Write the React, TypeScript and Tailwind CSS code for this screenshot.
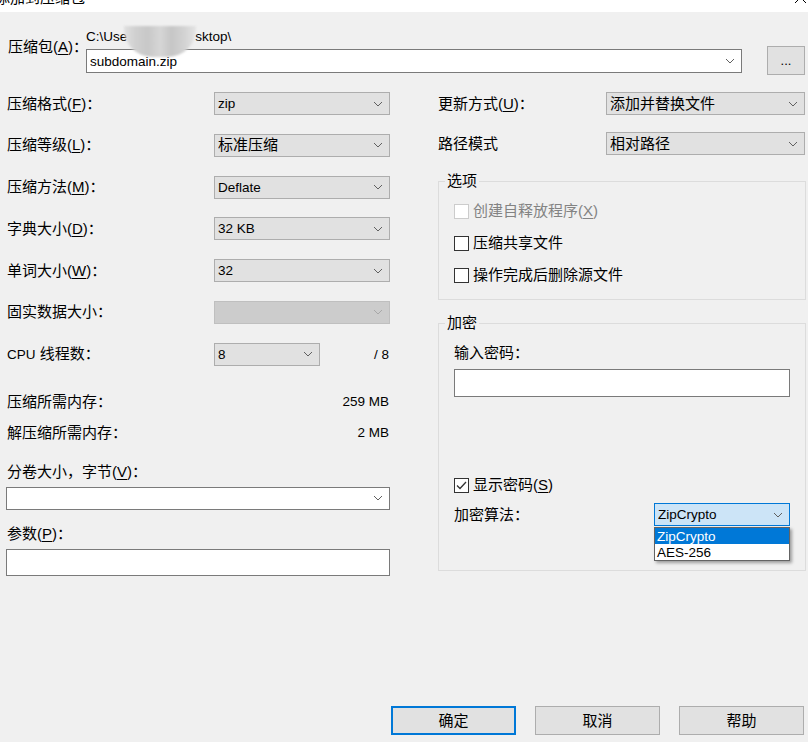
import { ReactNode } from "react";

type ComboVariant = "gray" | "white" | "disabled" | "focus";

const comboStyles: Record<ComboVariant, string> = {
    gray: "bg-[#e1e1e1] border-[#adadad]",
    white: "bg-white border-[#7a7a7a]",
    disabled: "bg-[#cccccc] border-[#bfbfbf]",
    focus: "bg-[#cce4f7] border-[#0078d7]",
};

function K({ children }: { children: ReactNode }) {
    return <span className="underline underline-offset-2">{children}</span>;
}

function Latin({ children }: { children: ReactNode }) {
    return <span className="text-[13.5px]">{children}</span>;
}

function Chevron({ color = "#606060" }: { color?: string }) {
    return (
        <svg width="10" height="6" viewBox="0 0 10 6" className="shrink-0">
            <path d="M1 1 L5 5 L9 1" fill="none" stroke={color} strokeWidth="1" />
        </svg>
    );
}

function Combo({
    value,
    variant = "gray",
    className = "",
    children,
}: {
    value?: ReactNode;
    variant?: ComboVariant;
    className?: string;
    children?: ReactNode;
}) {
    return (
        <div
            className={`relative flex items-center border pl-[3px] pr-[6px] ${comboStyles[variant]} ${className}`}
        >
            <div className="flex-1 truncate leading-[20px]">{value}</div>
            <Chevron color={variant === "disabled" ? "#a8a8a8" : "#606060"} />
            {children}
        </div>
    );
}

function Check({
    checked,
    disabled,
    children,
}: {
    checked?: boolean;
    disabled?: boolean;
    children: ReactNode;
}) {
    return (
        <div className="flex items-center h-[20px] whitespace-nowrap">
            <span
                className={`w-[15px] h-[15px] border bg-white flex items-center justify-center ${
                    disabled ? "border-[#cccccc]" : "border-[#333333]"
                }`}
            >
                {checked && (
                    <svg width="13" height="13" viewBox="0 0 13 13">
                        <path d="M2 6.5 L5 9.5 L11 3" fill="none" stroke="#333333" strokeWidth="1.3" />
                    </svg>
                )}
            </span>
            <span className={`ml-[4px] ${disabled ? "text-[#838383]" : ""}`}>{children}</span>
        </div>
    );
}

function Group({ title, children }: { title: string; children: ReactNode }) {
    return (
        <fieldset className="border border-[#dcdcdc] w-[368px]">
            <legend className="ml-[6px] px-[2px] leading-[20px]">{title}</legend>
            {children}
        </fieldset>
    );
}

const leftRows: { label: ReactNode; value: ReactNode; variant?: ComboVariant }[] = [
    { label: <>压缩格式(<K>F</K>)：</>, value: <Latin>zip</Latin> },
    { label: <>压缩等级(<K>L</K>)：</>, value: "标准压缩" },
    { label: <>压缩方法(<K>M</K>)：</>, value: <Latin>Deflate</Latin> },
    { label: <>字典大小(<K>D</K>)：</>, value: <Latin>32 KB</Latin> },
    { label: <>单词大小(<K>W</K>)：</>, value: <Latin>32</Latin> },
    { label: <>固实数据大小：</>, value: "", variant: "disabled" },
];

function Button({ children, primary }: { children: ReactNode; primary?: boolean }) {
    return (
        <button
            className={`w-[125px] h-[29px] bg-[#e1e1e1] flex items-center justify-center ${
                primary ? "border-2 border-[#0078d7]" : "border border-[#adadad]"
            }`}
        >
            {children}
        </button>
    );
}

export default function App() {
    return (
        <div className="w-[808px] h-[742px] flex flex-col bg-[#f0f0f0] text-black overflow-hidden whitespace-nowrap text-[15px] leading-[20px] font-['Liberation_Sans','Noto_Sans_CJK_SC',sans-serif]">
            {/* title bar, mostly scrolled off */}
            <div className="relative h-[12px] bg-white overflow-hidden shrink-0">
                <div className="ml-[-5px] mt-[-10px] leading-[16px]">添加到压缩包</div>
                <svg className="absolute right-[2px] top-[-8px]" width="11" height="11" viewBox="0 0 11 11">
                    <path d="M0 0 L11 11 M11 0 L0 11" stroke="#000" strokeWidth="1" />
                </svg>
            </div>

            {/* archive path */}
            <div className="flex h-[63px] shrink-0">
                <div className="w-[86px] pl-[8px] pt-[25px] shrink-0">
                    压缩包(<K>A</K>)：
                </div>
                <div className="w-[656px] pt-[16px] flex flex-col">
                    <div className="relative h-[18px] leading-[18px] text-[13.5px]">
                        {"C:\\Use"}
                        <span className="inline-block w-[68px]" />
                        {"sktop\\"}
                        <div className="absolute z-10 left-[38px] top-[-2px] w-[72px] h-[31px] rounded-b-[28px] blur-[1px] bg-[linear-gradient(90deg,#e0e0e0_0%,#d0d0d0_16%,#c8c8c8_33%,#d6d6d6_50%,#c6c6c6_66%,#d2d2d2_83%,#e4e4e4_100%)]" />
                    </div>
                    <Combo className="mt-[3px] h-[24px]" variant="white" value={<Latin>subdomain.zip</Latin>} />
                </div>
                <button className="ml-[25px] mt-[34px] w-[38px] h-[29px] bg-[#e1e1e1] border border-[#adadad] flex items-center justify-center text-[13px] leading-none">
                    ...
                </button>
            </div>

            {/* settings */}
            <div className="flex mt-[17px]">
                <div className="ml-[6px] w-[384px] flex flex-col">
                    <div className="flex flex-col gap-[18.8px]">
                        {leftRows.map((r, i) => (
                            <div key={i} className="flex items-center h-[23px]">
                                <div className="flex-1 pl-[1px]">{r.label}</div>
                                <Combo className="w-[176px] h-[23px]" variant={r.variant} value={r.value} />
                            </div>
                        ))}
                        <div className="flex items-center h-[23px]">
                            <div className="w-[208px] pl-[1px]">
                                <Latin>CPU</Latin> 线程数：
                            </div>
                            <Combo className="w-[106px] h-[23px]" value={<Latin>8</Latin>} />
                            <div className="flex-1 text-right pr-[1px]">
                                <Latin>/ 8</Latin>
                            </div>
                        </div>
                    </div>

                    <div className="mt-[26px] h-[20px] flex justify-between pl-[1px] pr-[1px]">
                        <span>压缩所需内存：</span>
                        <Latin>259 MB</Latin>
                    </div>
                    <div className="mt-[11px] h-[20px] flex justify-between pl-[1px] pr-[1px]">
                        <span>解压缩所需内存：</span>
                        <Latin>2 MB</Latin>
                    </div>

                    <div className="mt-[19px] h-[20px] pl-[1px]">
                        分卷大小，字节(<K>V</K>)：
                    </div>
                    <Combo className="mt-[5px] h-[23px]" variant="white" value="" />

                    <div className="mt-[14px] h-[20px] pl-[1px]">
                        参数(<K>P</K>)：
                    </div>
                    <div className="mt-[5px] h-[27px] bg-white border border-[#7a7a7a]" />
                </div>

                <div className="ml-[48px] w-[368px] flex flex-col">
                    <div className="flex items-center h-[23px]">
                        <div className="w-[168px]">
                            更新方式(<K>U</K>)：
                        </div>
                        <Combo className="w-[199px] h-[23px]" value="添加并替换文件" />
                    </div>
                    <div className="flex items-center h-[23px] mt-[17px]">
                        <div className="w-[168px]">路径模式</div>
                        <Combo className="w-[199px] h-[23px]" value="相对路径" />
                    </div>

                    <div className="mt-[16px]">
                        <Group title="选项">
                            <div className="pl-[15px] pt-[10px] pb-[14px] flex flex-col gap-[12px]">
                                <Check disabled>
                                    创建自释放程序(<K>X</K>)
                                </Check>
                                <Check>压缩共享文件</Check>
                                <Check>操作完成后删除源文件</Check>
                            </div>
                        </Group>
                    </div>

                    <div className="mt-[13px]">
                        <Group title="加密">
                            <div className="pl-[15px] pr-[15px] pt-[10px] pb-[44px] flex flex-col">
                                <div className="h-[20px]">输入密码：</div>
                                <div className="mt-[6px] h-[28px] bg-white border border-[#7a7a7a]" />
                                <div className="mt-[78px]">
                                    <Check checked>
                                        显示密码(<K>S</K>)
                                    </Check>
                                </div>
                                <div className="mt-[8px] flex items-center h-[23px]">
                                    <div className="w-[200px]">加密算法：</div>
                                    <Combo className="w-[136px] h-[23px]" variant="focus" value={<Latin>ZipCrypto</Latin>}>
                                        <div className="absolute z-20 left-[-1px] top-[23px] w-[136px] border border-[#646464] bg-white shadow-[2px_2px_3px_rgba(0,0,0,0.35)] flex flex-col">
                                            <div className="h-[16px] leading-[16px] pl-[2px] bg-[#0078d7] text-white">
                                                <Latin>ZipCrypto</Latin>
                                            </div>
                                            <div className="h-[16px] leading-[16px] pl-[2px]">
                                                <Latin>AES-256</Latin>
                                            </div>
                                        </div>
                                    </Combo>
                                </div>
                            </div>
                        </Group>
                    </div>
                </div>
            </div>

            {/* buttons */}
            <div className="mt-auto flex justify-end gap-[19px] pr-[4px] pb-[7px]">
                <Button primary>确定</Button>
                <Button>取消</Button>
                <Button>帮助</Button>
            </div>
        </div>
    );
}
